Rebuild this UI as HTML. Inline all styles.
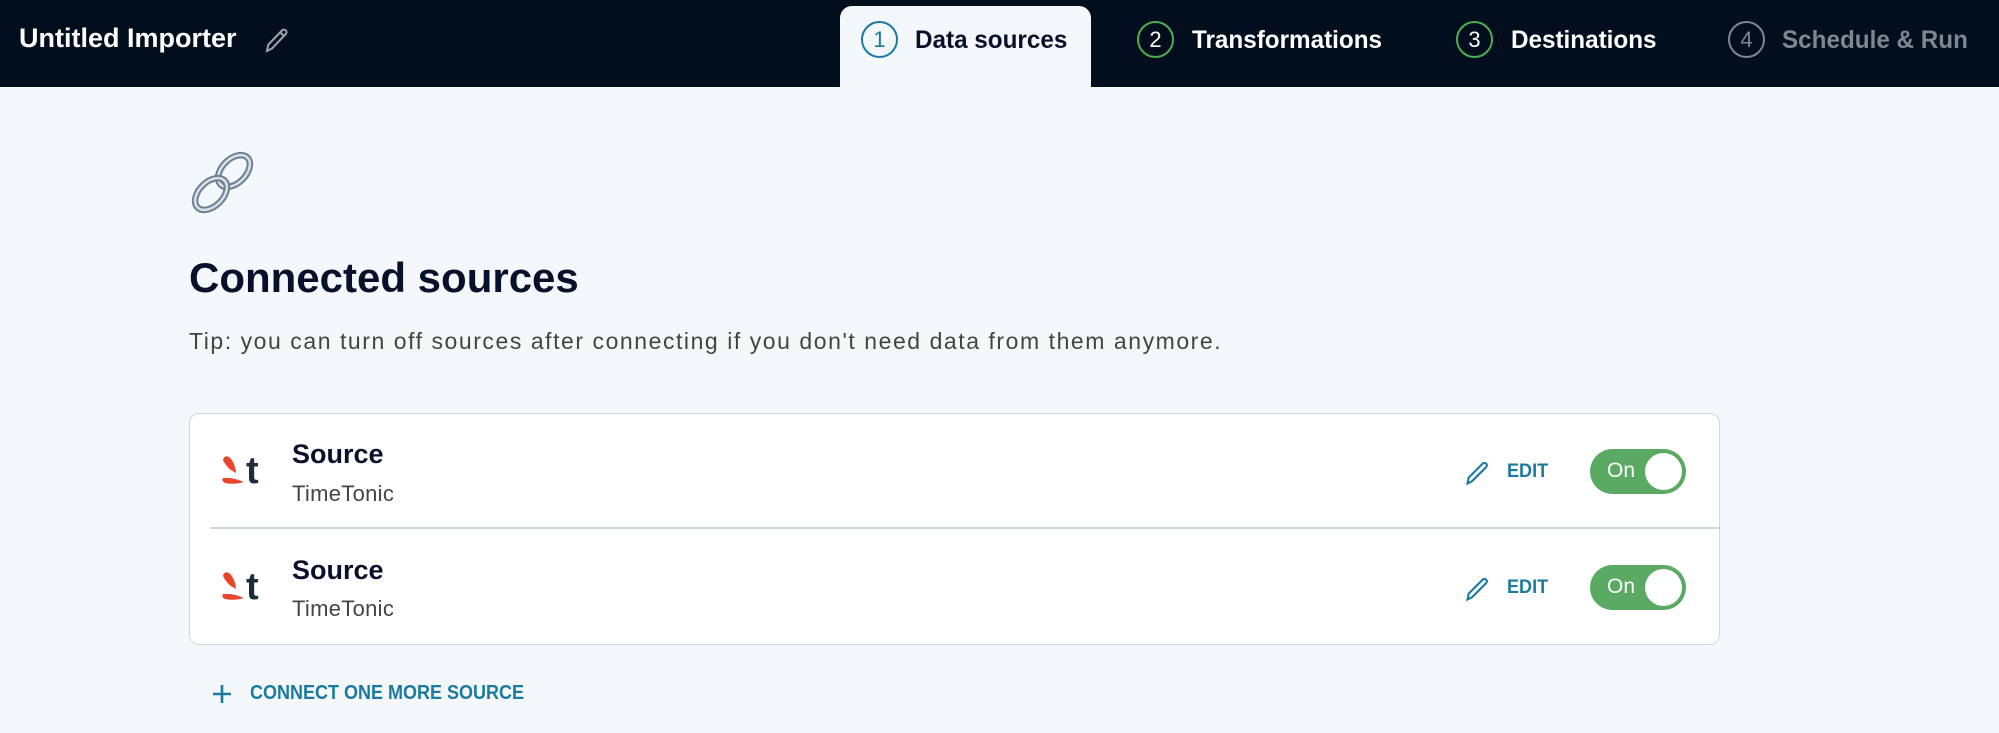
<!DOCTYPE html>
<html><head><meta charset="utf-8"><style>
*{margin:0;padding:0;box-sizing:border-box}
body{width:1999px;height:733px;background:#f5f8fa;font-family:"Liberation Sans",sans-serif;position:relative;overflow:hidden}
.hdr{position:absolute;left:0;top:0;width:1999px;height:87px;background:#020d1e}
.a{position:absolute;white-space:nowrap}
.n{transform-origin:left center;display:inline-block}
.circ{position:absolute;width:37px;height:37px;border-radius:50%;border:2px solid #4caf50;color:#fff;font-size:22px;text-align:center;line-height:33px}
.tab{color:#fff;font-size:25px;font-weight:bold}
.tab span{display:inline-block;transform:scaleX(.97);transform-origin:left center}
.card{position:absolute;left:189px;top:413px;width:1531px;height:232px;background:#fff;border:1.5px solid #cfd8de;border-radius:10px}
.src{font-size:27px;font-weight:bold;color:#0a0f2c}
.tt{font-size:22px;color:#444;letter-spacing:0.3px}
.edit{color:#1a7aa0;font-size:19px;font-weight:bold}
.tog{position:absolute;width:96px;height:45px;border-radius:23px;background:#5aaa64}
.tog span{position:absolute;left:17px;top:10px;color:#fff;font-size:21px}
.tog i{position:absolute;right:4px;top:4px;width:37px;height:37px;border-radius:50%;background:#fff}
</style></head><body>
<div class="hdr"></div>
<div class="a" style="left:19px;top:23px;color:#fff;font-size:27px;font-weight:bold">Untitled Importer</div>
<svg class="a" style="left:262px;top:26px" width="30" height="30" viewBox="0 0 24 24" fill="none" stroke="#9aa3ad" stroke-width="1.6"><path d="M4 20l1-5L16 3.5a2 2 0 013 3L8 18z M14.5 5l3 3"/></svg>

<div class="a" style="left:840px;top:6px;width:251px;height:81px;background:#f5f8fa;border-radius:12px 12px 0 0"></div>
<div class="circ" style="left:861px;top:21px;border-color:#1a7aa0;color:#1a7aa0">1</div>
<div class="a tab" style="left:915px;top:26px;color:#0a0f2c"><span>Data sources</span></div>
<div class="circ" style="left:1137px;top:21px">2</div>
<div class="a tab" style="left:1192px;top:26px"><span>Transformations</span></div>
<div class="circ" style="left:1456px;top:21px">3</div>
<div class="a tab" style="left:1511px;top:26px"><span>Destinations</span></div>
<div class="circ" style="left:1728px;top:21px;border-color:#7b8792;color:#7b8792">4</div>
<div class="a tab" style="left:1782px;top:26px;color:#7b8792"><span>Schedule &amp; Run</span></div>

<svg class="a" style="left:188px;top:148px" width="70" height="70" viewBox="0 0 70 70" fill="none">
<ellipse cx="46" cy="23" rx="12" ry="19" transform="rotate(45 46 23)" stroke="#6f7f8c" stroke-width="6.5"/>
<ellipse cx="46" cy="23" rx="12" ry="19" transform="rotate(45 46 23)" stroke="#d5e2ee" stroke-width="2.5"/>
<ellipse cx="23" cy="46" rx="12" ry="19" transform="rotate(45 23 46)" stroke="#6f7f8c" stroke-width="6.5"/>
<ellipse cx="23" cy="46" rx="12" ry="19" transform="rotate(45 23 46)" stroke="#d5e2ee" stroke-width="2.5"/>
</svg>

<div class="a" style="left:189px;top:254px;font-size:42px;font-weight:bold;color:#0a0f2c">Connected sources</div>
<div class="a" style="left:189px;top:328px;font-size:23px;color:#444;letter-spacing:1.55px">Tip: you can turn off sources after connecting if you don't need data from them anymore.</div>

<div class="card"></div>
<div class="a" style="left:210px;top:527px;width:1510px;height:1.5px;background:#cfd8de"></div>

<svg class="a" style="left:220px;top:452px" width="50" height="36" viewBox="0 0 50 36"><path d="M3 8q1-5 6-3q6 5 7 16q-9-4-13-13z M3 26q10-1 21 4q-10 3-19 1q-4-2-2-5z" fill="#e8452c"/><text x="26" y="31" font-family="Liberation Sans" font-weight="bold" font-size="38" fill="#1f2d3a">t</text></svg>
<div class="a src" style="left:292px;top:439px">Source</div>
<div class="a tt" style="left:292px;top:481px">TimeTonic</div>
<svg class="a" style="left:1463px;top:459px" width="30" height="28" viewBox="0 0 24 24" fill="none" stroke="#1a7aa0" stroke-width="1.8"><path d="M3 21l1-5L16 4a2 2 0 013 3L7 19z"/></svg>
<div class="a edit" style="left:1507px;top:461px"><span class="n" style="transform:scaleX(.95)">EDIT</span></div>
<div class="tog" style="left:1590px;top:449px"><span>On</span><i></i></div>

<svg class="a" style="left:220px;top:568px" width="50" height="36" viewBox="0 0 50 36"><path d="M3 8q1-5 6-3q6 5 7 16q-9-4-13-13z M3 26q10-1 21 4q-10 3-19 1q-4-2-2-5z" fill="#e8452c"/><text x="26" y="31" font-family="Liberation Sans" font-weight="bold" font-size="38" fill="#1f2d3a">t</text></svg>
<div class="a src" style="left:292px;top:555px">Source</div>
<div class="a tt" style="left:292px;top:596px">TimeTonic</div>
<svg class="a" style="left:1463px;top:575px" width="30" height="28" viewBox="0 0 24 24" fill="none" stroke="#1a7aa0" stroke-width="1.8"><path d="M3 21l1-5L16 4a2 2 0 013 3L7 19z"/></svg>
<div class="a edit" style="left:1507px;top:577px"><span class="n" style="transform:scaleX(.95)">EDIT</span></div>
<div class="tog" style="left:1590px;top:565px"><span>On</span><i></i></div>

<svg class="a" style="left:212px;top:684px" width="20" height="20" viewBox="0 0 20 20" stroke="#1a7aa0" stroke-width="2.6"><path d="M10 1v18M1 10h18"/></svg>
<div class="a edit" style="left:250px;top:682px;font-size:20px"><span class="n" style="transform:scaleX(.9)">CONNECT ONE MORE SOURCE</span></div>
</body></html>
